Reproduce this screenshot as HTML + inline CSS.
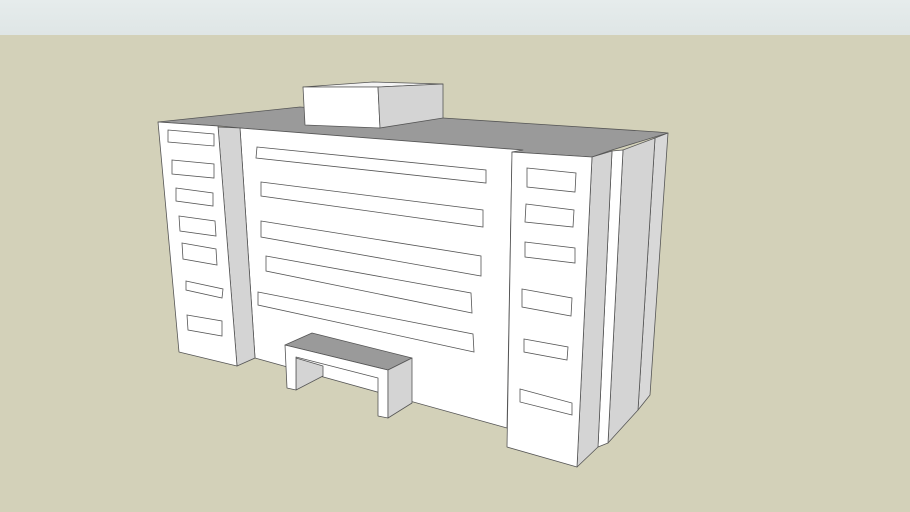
<!DOCTYPE html>
<html><head><style>html,body{margin:0;padding:0;width:910px;height:512px;overflow:hidden;background:#d3d1b9}</style></head><body>
<svg width="910" height="512" viewBox="0 0 910 512" xmlns="http://www.w3.org/2000/svg">
<defs><linearGradient id="sky" x1="0" y1="0" x2="0" y2="1"><stop offset="0" stop-color="#e6ecec"/><stop offset="1" stop-color="#dfe6e6"/></linearGradient></defs>
<rect x="0" y="0" width="910" height="35" fill="url(#sky)"/>
<rect x="0" y="35" width="910" height="477" fill="#d3d1b9"/>
<g stroke="#555" stroke-width="0.8" stroke-linejoin="round">
<polygon points="158,122 300,107 443,118 658,132 668,133 612,150 592,157 512,152 240,128 220,126" fill="#9a9a9a"/>
<polygon points="303,87 373,82 443,84 378,87" fill="#f4f4f4"/>
<polygon points="303,87 378,87 380,128 305,125" fill="#fff"/>
<polygon points="378,87 443,84 443,118 380,128" fill="#d4d4d4"/>
<polygon points="655,138 668,133 650,395 638,410" fill="#d8d8d8"/>
<polygon points="623,150 655,138 638,410 608,443" fill="#d4d4d4"/>
<polygon points="612,151 623,150 608,443 598,447" fill="#fff"/>
<polygon points="592,157 612,151 598,447 577,467" fill="#d4d4d4"/>
<polygon points="240,128 523,150 512,152 507,428 255,358" fill="#fff"/>
<polygon points="218,127 240,128 255,358 237,366" fill="#d4d4d4"/>
<polygon points="158,122 218,126 237,366 179,352" fill="#fff"/>
<polygon points="512,152 592,157 577,467 507,447" fill="#fff"/>
</g>
<g stroke="#555" stroke-width="0.8" fill="#fff">
<polygon points="168,130 214,134 214,146 168,142"/>
<polygon points="172,160 214,164 214,178 172,174"/>
<polygon points="176,188 213,193 213,206 176,201"/>
<polygon points="179,216 215,221 216,236 180,231"/>
<polygon points="182,243 216,249 217,265 183,259"/>
<polygon points="186,281 223,289 222,298 186,290"/>
<polygon points="187,315 222,321 222,336 188,330"/>
<polygon points="257,147 486,170 486,183 256,158"/>
<polygon points="261,182 483,210 483,227 261,196"/>
<polygon points="261,221 481,256 481,276 261,237"/>
<polygon points="266,256 471,293 472,313 266,271"/>
<polygon points="258,292 473,334 474,352 258,305"/>
<polygon points="527,168 576,173 575,192 527,187"/>
<polygon points="526,204 574,210 573,227 525,222"/>
<polygon points="525,242 575,248 575,263 525,257"/>
<polygon points="522,289 572,298 571,316 522,307"/>
<polygon points="524,339 568,347 567,360 524,352"/>
<polygon points="520,389 572,403 572,415 520,402"/>
</g>
<g stroke="#555" stroke-width="0.8" stroke-linejoin="round">
<polygon points="296,358 323,366 323,376 296,390" fill="#d4d4d4"/>
<polygon points="285,345 312,333 412,358 388,370" fill="#9a9a9a"/>
<polygon points="285,345 388,370 388,418 378,416 378,378 296,357 296,390 287,388" fill="#fff"/>
<polygon points="388,370 412,358 412,403 388,418" fill="#d4d4d4"/>
</g>
</svg>
</body></html>
